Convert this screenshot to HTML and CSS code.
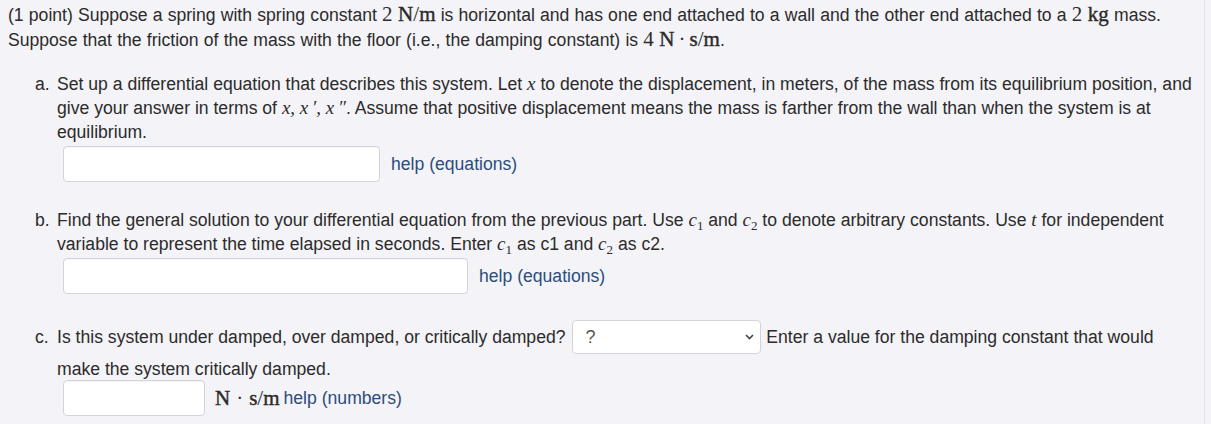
FILE: index.html
```html
<!DOCTYPE html>
<html>
<head>
<meta charset="utf-8">
<link rel="stylesheet" href="styles.css">
</head>
<body>
<div class="problem">
  <p class="intro">(1 point) Suppose a spring with spring constant <span class="m">2&nbsp;<b>N</b>/<b>m</b></span> is horizontal and has one end attached to a wall and the other end attached to a <span class="m">2&nbsp;<b>kg</b></span> mass.<br>Suppose that the friction of the mass with the floor (i.e., the damping constant) is <span class="m">4&nbsp;<b>N</b><span class="op">·</span><b>s</b>/<b>m</b></span>.</p>

  <div class="part part-a">
    <span class="label">a.</span>
    <div class="body">
      <p class="text">Set up a differential equation that describes this system. Let <i class="mi">x</i> to denote the displacement, in meters, of the mass from its equilibrium position, and give your answer in terms of <span class="mi"><i>x</i>, <i>x</i>&thinsp;′, <i>x</i>&thinsp;″</span>. Assume that positive displacement means the mass is farther from the wall than when the system is at equilibrium.</p>
      <div class="answer">
        <input class="field field-a" type="text">
        <a class="help">help (equations)</a>
      </div>
    </div>
  </div>

  <div class="part part-b">
    <span class="label">b.</span>
    <div class="body">
      <p class="text">Find the general solution to your differential equation from the previous part. Use <i class="mi">c</i><sub>1</sub> and <i class="mi">c</i><sub>2</sub> to denote arbitrary constants. Use <i class="mi">t</i> for independent variable to represent the time elapsed in seconds. Enter <i class="mi">c</i><sub>1</sub> as c1 and <i class="mi">c</i><sub>2</sub> as c2.</p>
      <div class="answer">
        <input class="field field-b" type="text">
        <a class="help">help (equations)</a>
      </div>
    </div>
  </div>

  <div class="part part-c">
    <span class="label">c.</span>
    <div class="body">
      <p class="text text-c">Is this system under damped, over damped, or critically damped? <span class="select"><span class="sel-val">?</span><svg class="chev" width="9" height="6" viewBox="0 0 9 6"><path d="M1 1 L4.5 4.5 L8 1" fill="none" stroke="#444" stroke-width="1.6"/></svg></span> Enter a value for the damping constant that would make the system critically damped.</p>
      <div class="answer">
        <input class="field field-c" type="text">
        <span class="unit"><b>N</b><span class="op op-u">·</span><b>s</b>/<b>m</b></span>
        <a class="help help-c">help (numbers)</a>
      </div>
    </div>
  </div>
</div>
</body>
</html>
```

FILE: styles.css
```css
html, body {
  margin: 0;
  padding: 0;
  background: #f4f3f7;
}
body {
  font-family: "Liberation Sans", Arial, sans-serif;
  font-size: 17.6px;
  color: #2b2b2b;
}
.problem {
  width: 1205px;
  height: 424px;
  border-right: 1px solid #e4e3e8;
  box-sizing: border-box;
  padding: 2px 0 0 8px;
}
.intro {
  margin: 0;
  line-height: 24px;
  word-spacing: 0.3px;
}
.m {
  font-family: "Liberation Serif", "Times New Roman", serif;
  font-size: 21px;
}
.m b, .unit b {
  font-weight: normal;
  -webkit-text-stroke: 0.4px currentColor;
}
.op {
  margin: 0 4px;
}
.op-u {
  margin: 0 6px;
}
.mi {
  font-family: "Liberation Serif", "Times New Roman", serif;
  font-size: 19px;
  font-style: italic;
}
.mi i { font-style: italic; }
sub {
  font-family: "Liberation Serif", serif;
  font-size: 13px;
  vertical-align: -4px;
  line-height: 0;
}
.part {
  display: flex;
  margin-left: 27px;
}
.label {
  width: 22px;
  flex: none;
  line-height: 24px;
}
.body {
  flex: 1;
  padding-right: 11px;
}
.text {
  margin: 0;
  line-height: 24px;
}
.part-a { margin-top: 20px; }
.part-b { margin-top: 26px; }
.part-c { margin-top: 26px; }
.part-c .label { line-height: 34px; }
.answer {
  display: flex;
  align-items: center;
  margin-top: 2px;
  margin-left: 6px;
}
.part-b .answer { margin-top: 2px; }
.part-c .answer { margin-top: -1px; }
.field {
  height: 36px;
  box-sizing: border-box;
  border: 1px solid #d4d4d8;
  border-radius: 4px;
  background: #ffffff;
  margin: 0;
  padding: 0 8px;
  box-shadow: inset 0 1px 1px rgba(0,0,0,0.04);
}
.field-a { width: 317px; }
.field-b { width: 405px; }
.field-c { width: 142px; }
.help {
  color: #2b4d7d;
  margin-left: 11px;
  text-decoration: none;
}
.unit {
  font-family: "Liberation Serif", "Times New Roman", serif;
  font-size: 21px;
  margin-left: 10px;
}
.help-c { margin-left: 4px; }
.select {
  display: inline-flex;
  align-items: center;
  justify-content: space-between;
  vertical-align: middle;
  width: 189px;
  height: 34px;
  box-sizing: border-box;
  border: 1px solid #d4d4d8;
  border-radius: 4px;
  background: #fff;
  padding: 0 6px 0 12px;
  margin: 0 0 3px 2px;
  color: #555;
  font-size: 18px;
}
.text-c { line-height: 24px; }
```
